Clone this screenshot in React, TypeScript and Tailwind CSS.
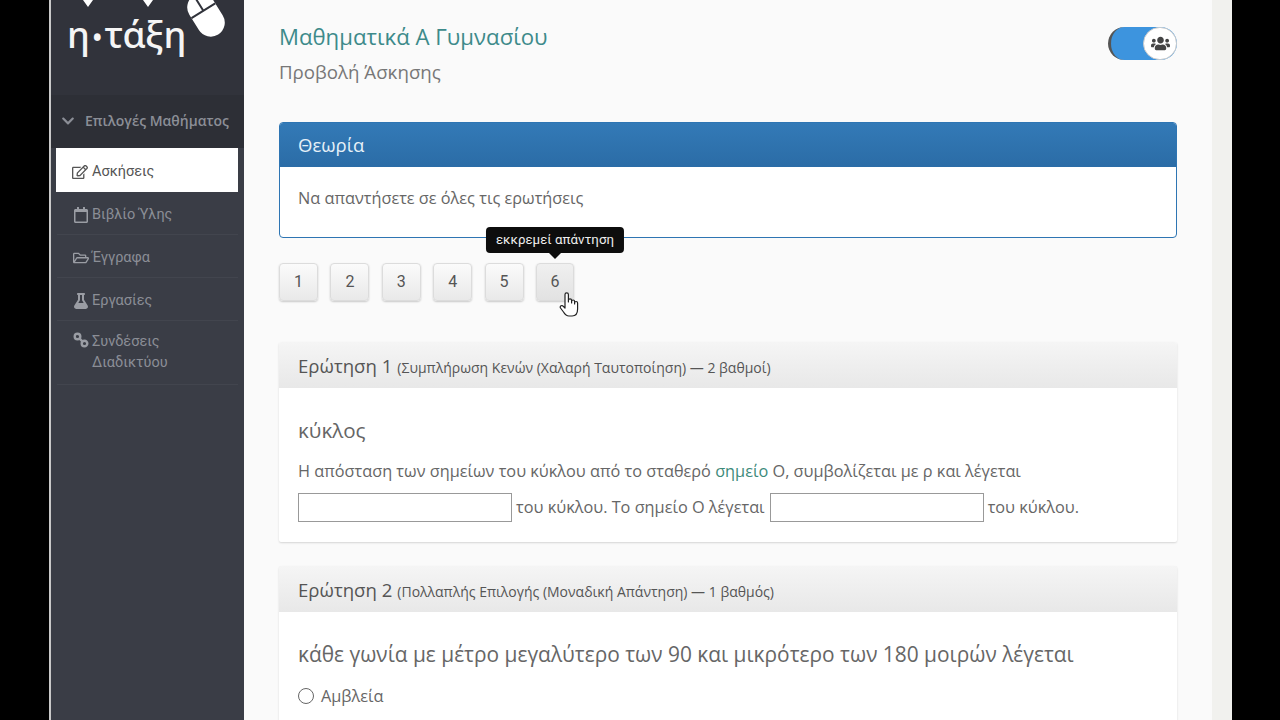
import React from "react";
import { FaChevronDown, FaRegEdit, FaRegCalendar, FaRegFolderOpen, FaFlask, FaUsers } from "react-icons/fa";

const font = { fontFamily: '"Open Sans", "Noto Sans", sans-serif' };
const roboto = { fontFamily: 'Roboto, "Noto Sans", sans-serif' };

function LinkIcon() {
  return (
    <svg width="16" height="16" viewBox="0 0 16 16" fill="none" stroke="currentColor" strokeWidth="2.4">
      <circle cx="4.500" cy="4.500" r="2.800" />
      <circle cx="11.500" cy="11.500" r="2.800" />
      <path d="M6.500 6.500l3 3" />
    </svg>
  );
}

function NavItem({ icon, children, last }: { icon: React.ReactNode; children: React.ReactNode; last?: boolean }) {
  return (
    <div className={`mx-[6px] flex border-b border-[#42454e] pl-[16px] text-[14.500px] leading-[21px] text-[#8b8e96] ${last ? "pb-[11px] pt-[10px]" : "h-[43px] items-center pt-[2px]"}`} style={roboto}>
      <span className="flex w-[19px] shrink-0 pt-[1px] text-[16px] text-[#9a9da4]">{icon}</span>
      <span>{children}</span>
    </div>
  );
}

function Num({ n, hover }: { n: number; hover?: boolean }) {
  return (
    <div className={`flex h-[38px] items-center justify-center rounded-[4px] border border-[#dcdcdc] bg-gradient-to-b text-[16px] text-[#555] shadow-[0_1px_2px_rgba(0,0,0,0.2)] ${hover ? "w-[38px] from-[#f0f0f0] to-[#e2e2e2]" : "w-[39px] from-[#fbfbfb] to-[#e9e9e9]"}`} style={roboto}>
      {n}
    </div>
  );
}

function QHead({ title, sub }: { title: string; sub: string }) {
  return (
    <div className="flex h-[46px] items-center bg-gradient-to-b from-[#f5f5f5] to-[#e8e8e8] px-[19px] pt-[2px] text-[#555]">
      <span className="text-[18.600px]">{title}</span>
      <span className="ml-[5px] mt-[3px] text-[14px]">{sub}</span>
    </div>
  );
}

export default function App() {
  return (
    <div className="flex h-[720px] w-[1280px] overflow-hidden bg-black" style={font}>
      <div className="w-[49px] shrink-0 bg-black" />
      <div className="w-[2px] shrink-0 bg-[#c9c9c9]" />
      <aside className="flex w-[193px] shrink-0 flex-col bg-[#3a3d46]">
        <div className="relative flex h-[95px] items-start overflow-hidden bg-[#31333b] pl-[16px]">
          <span className="mt-[6px] text-[37px] font-medium leading-[56px] text-[#f5f5f5]" style={{ fontFamily: '"Noto Sans", sans-serif' }}>η<span className="mx-[2px] text-[28px]">•</span>τάξη</span>
          <svg width="193" height="95" viewBox="0 0 193 95" className="absolute left-0 top-0">
            <path d="M32 0h10l-5 7zM92 0h10l-5 7z" fill="#fff" />
            <g transform="translate(-51 0) rotate(-32 206 15)">
              <rect x="192" y="-8" width="28" height="46" rx="14" fill="#fff" />
              <path d="M192 10h28M206 -8v18" stroke="#31333b" strokeWidth="2" />
            </g>
          </svg>
        </div>
        <div className="flex h-[53px] items-center bg-[#2d2f36] pb-[2px] pl-[10px] text-[14px] font-semibold text-[#8b8e96]">
          <FaChevronDown className="mr-[10px] text-[14px]" />
          Επιλογές Μαθήματος
        </div>
        <div className="ml-[5px] mr-[6px] flex h-[44px] items-center bg-white pl-[16px] pt-[3px] text-[14.500px] text-[#555]" style={roboto}>
          <span className="flex w-[20px] text-[16px]"><FaRegEdit /></span>
          Ασκήσεις
        </div>
        <NavItem icon={<FaRegCalendar />}>Βιβλίο Ύλης</NavItem>
        <NavItem icon={<FaRegFolderOpen />}>Έγγραφα</NavItem>
        <NavItem icon={<FaFlask />}>Εργασίες</NavItem>
        <NavItem icon={<LinkIcon />} last>Συνδέσεις<br />Διαδικτύου</NavItem>
      </aside>
      <main className="w-[968px] shrink-0 overflow-hidden bg-[#fafafa] px-[35px]">
        <div className="flex items-start justify-between pt-[21px]">
          <div>
            <div className="text-[22.200px] leading-[32px] text-[#3d8a8a]">Μαθηματικά Α Γυμνασίου</div>
            <div className="mt-[5px] text-[18.700px] leading-[28px] text-[#777]">Προβολή Άσκησης</div>
          </div>
          <div className="relative mt-[6px] h-[33px] w-[69px] rounded-full border-l-[3px] border-[#555] bg-[#3d94de]">
            <div className="absolute right-0 top-0 flex h-[33px] w-[34px] items-center justify-center rounded-full border border-[#ccc] bg-white text-[19px] text-[#444]">
              <FaUsers />
            </div>
          </div>
        </div>
        <section className="mt-[36px] overflow-hidden rounded-[4px] border border-[#2e75b3] bg-white">
          <div className="flex h-[44px] items-center bg-gradient-to-b from-[#337ab7] to-[#2b6ca6] px-[18px] text-[18.500px] text-[#e6f0f8]">Θεωρία</div>
          <div className="flex h-[70px] items-start px-[18px] pt-[19px] text-[16.300px] leading-[24px] text-[#666]">Να απαντήσετε σε όλες τις ερωτήσεις</div>
        </section>
        <div className="mt-[25px] flex gap-[12.400px]">
          <Num n={1} /><Num n={2} /><Num n={3} /><Num n={4} /><Num n={5} />
          <div className="relative">
            <Num n={6} hover />
            <div className="absolute bottom-[48px] left-1/2 flex h-[26px] -translate-x-1/2 items-center whitespace-nowrap rounded-[4px] bg-[#0d0d0d] px-[10px] text-[13.300px] text-[#eee]" style={roboto}>
              εκκρεμεί απάντηση
              <div className="absolute bottom-[-6px] left-1/2 h-0 w-0 -translate-x-1/2 border-l-[6px] border-r-[6px] border-t-[6px] border-l-transparent border-r-transparent border-t-[#0d0d0d]" />
            </div>
            <svg width="20" height="28" viewBox="0 0 20 28" className="absolute left-[23px] top-[28px]">
              <path d="M6 15V3.500a1.700 1.700 0 0 1 3.400 0V11v-1.500a1.600 1.600 0 0 1 3.200 0V12v-1.500a1.500 1.500 0 0 1 3 0V13v-1a1.500 1.500 0 0 1 3 0v6c0 4-2 7-5.500 7H10c-3 0-4-1.500-5.500-4L1.500 17c-1-2 1.500-3.500 3-1.500L6 17z" fill="#fff" stroke="#222" strokeWidth="1.200" strokeLinejoin="round" />
            </svg>
          </div>
        </div>
        <section className="mt-[41px] h-[200px] overflow-hidden rounded-[2px] bg-white shadow-[0_1px_2px_rgba(0,0,0,0.15)]">
          <QHead title="Ερώτηση 1" sub="(Συμπλήρωση Κενών (Χαλαρή Ταυτοποίηση) — 2 βαθμοί)" />
          <div className="px-[19px] pt-[26px] text-[#666]">
            <div className="text-[20.600px] leading-[32px]">κύκλος</div>
            <div className="mt-[13px] text-[16.300px] leading-[24px]">Η απόσταση των σημείων του κύκλου από το σταθερό <span className="text-[#3d8a7a]">σημείο</span> Ο, συμβολίζεται με ρ και λέγεται</div>
            <div className="mt-[10px] flex items-center text-[16.300px] leading-[29px]">
              <input className="h-[29px] w-[214px] border border-[#999] bg-white" />
              <span className="ml-[4px]">του κύκλου. Το σημείο Ο λέγεται</span>
              <input className="ml-[5px] h-[29px] w-[214px] border border-[#999] bg-white" />
              <span className="ml-[4px]">του κύκλου.</span>
            </div>
          </div>
        </section>
        <section className="mt-[24px] h-[200px] rounded-[2px] bg-white shadow-[0_1px_2px_rgba(0,0,0,0.15)]">
          <QHead title="Ερώτηση 2" sub="(Πολλαπλής Επιλογής (Μοναδική Απάντηση) — 1 βαθμός)" />
          <div className="px-[19px] pt-[26px] text-[#666]">
            <div className="text-[20.900px] leading-[32px]">κάθε γωνία με μέτρο μεγαλύτερο των 90 και μικρότερο των 180 μοιρών λέγεται</div>
            <div className="mt-[14px] flex items-center text-[16.300px] leading-[24px]">
              <span className="mr-[7px] h-[16px] w-[16px] rounded-full border border-[#666] bg-white" />
              Αμβλεία
            </div>
          </div>
        </section>
      </main>
      <div className="w-[20px] shrink-0 bg-[#f1f1ee]" />
      <div className="flex-1 bg-black" />
    </div>
  );
}
